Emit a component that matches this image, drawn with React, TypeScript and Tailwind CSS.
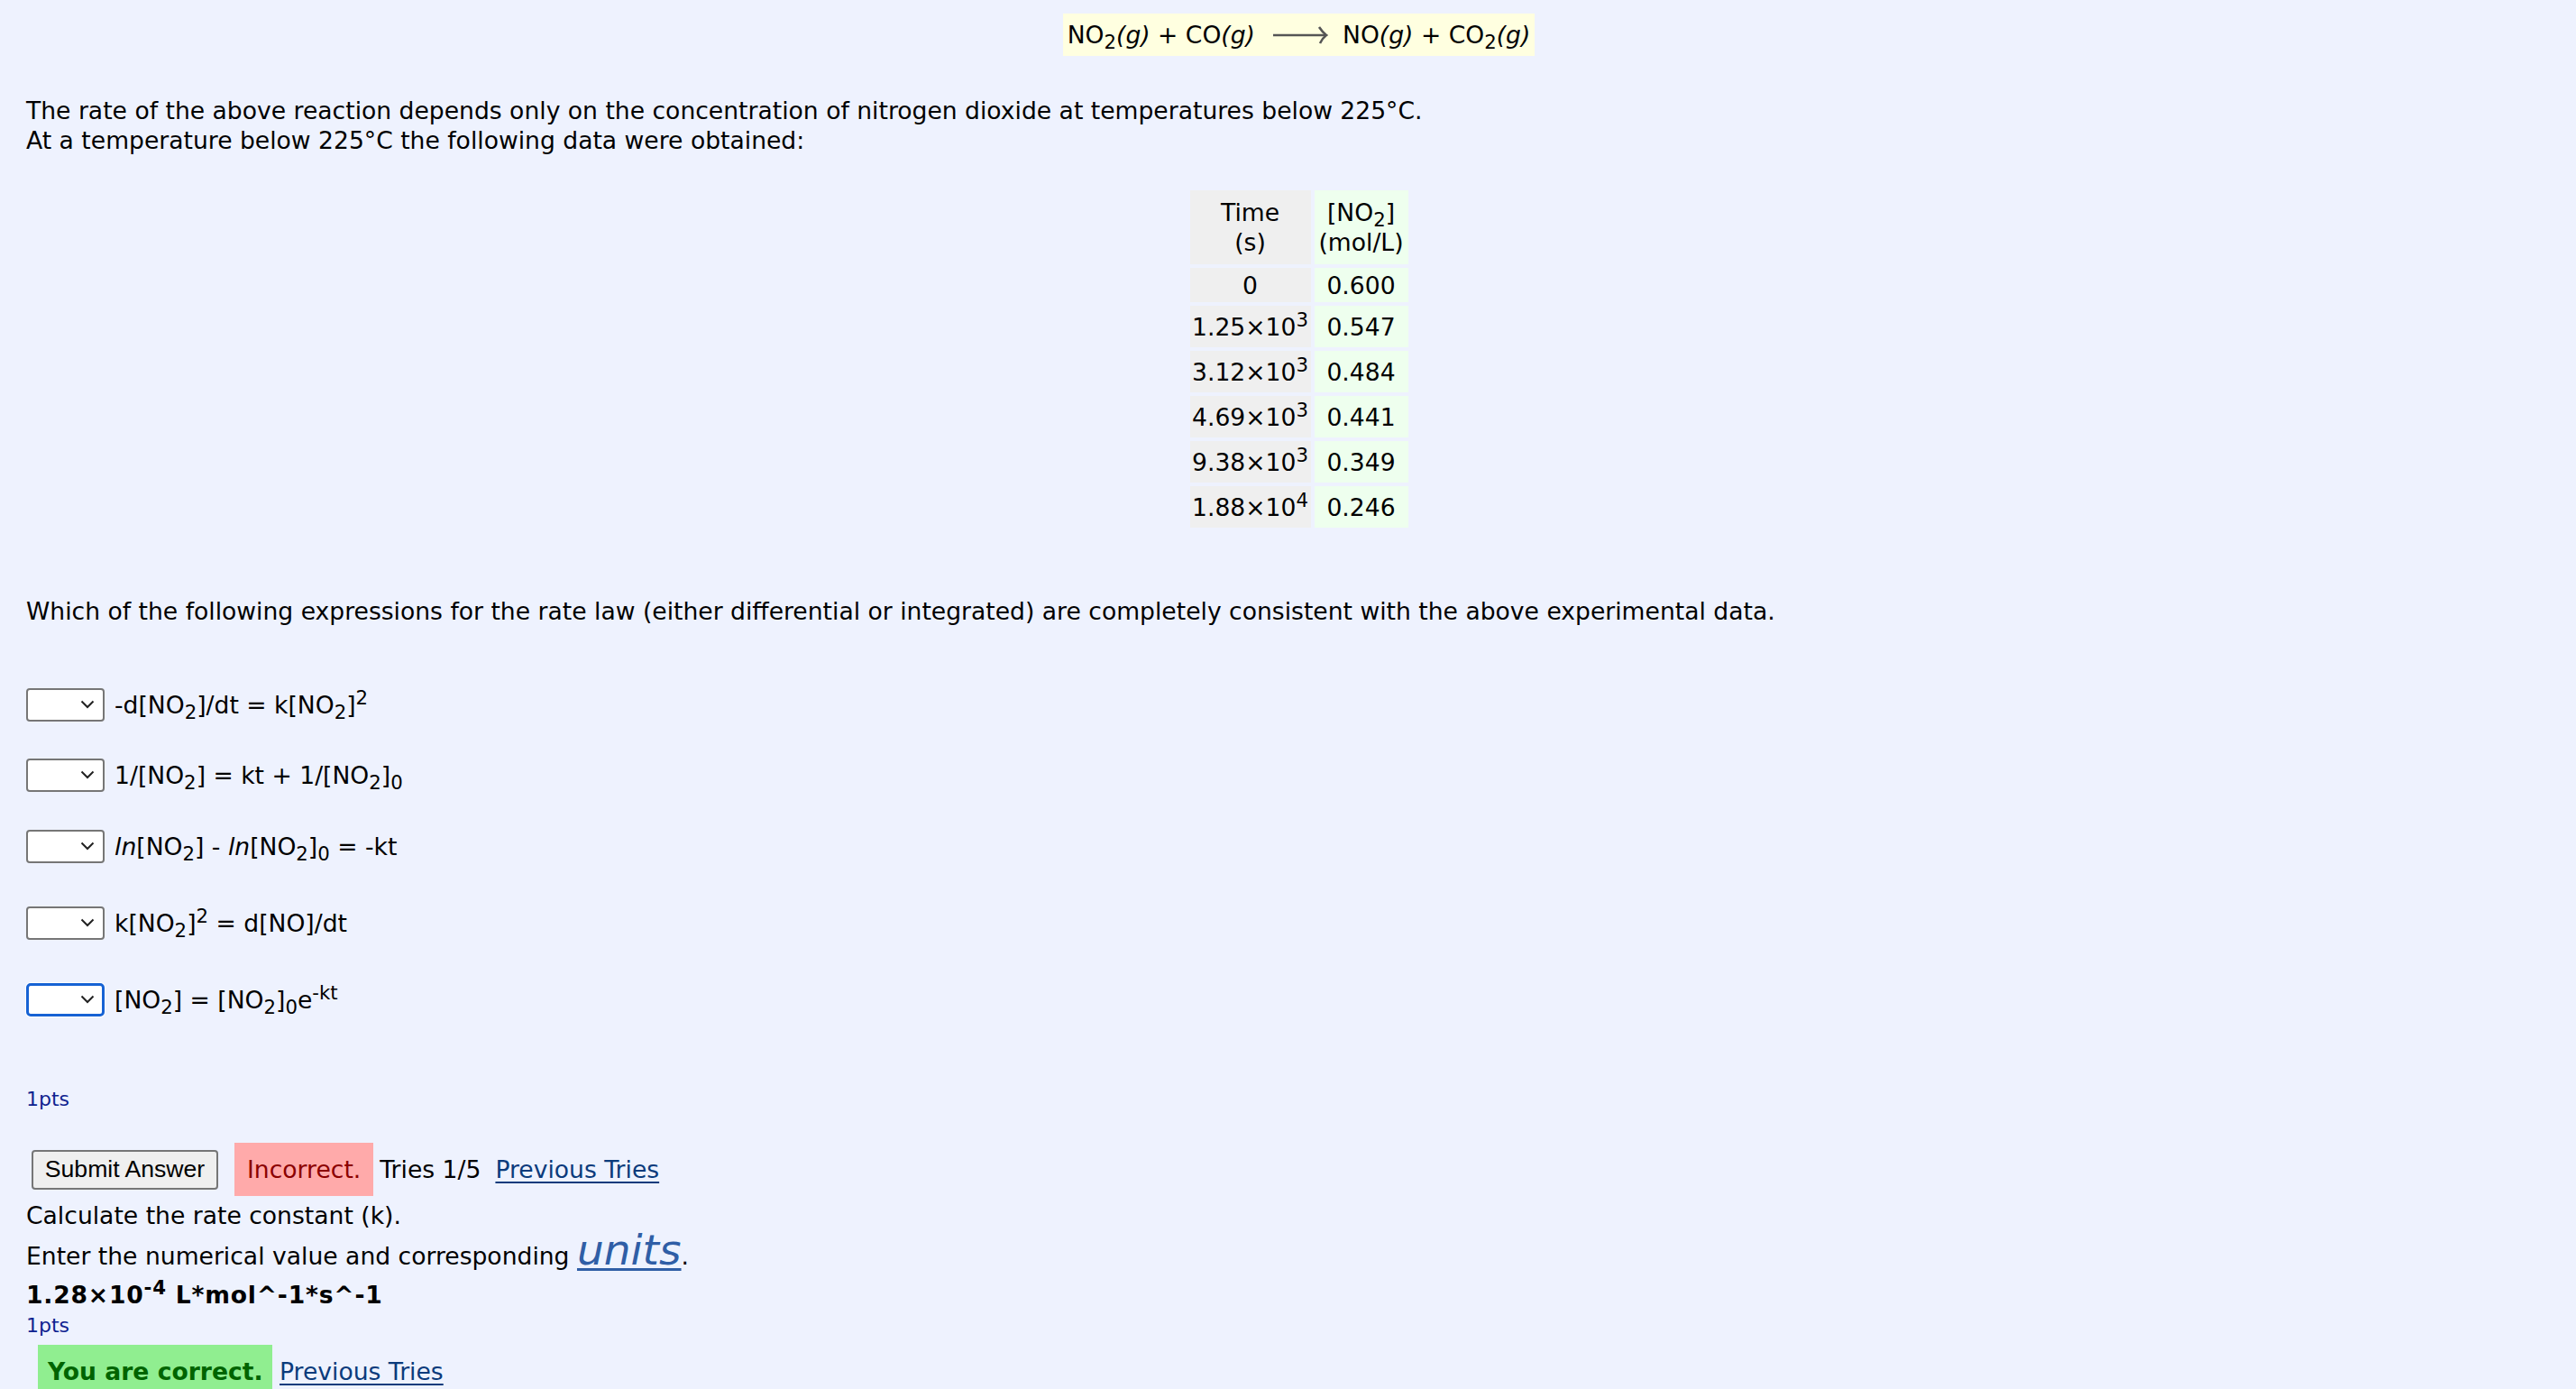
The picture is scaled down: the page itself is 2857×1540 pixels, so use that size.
import React from "react";

function Sub({ children }: { children: React.ReactNode }) {
  return <sub className="text-[0.8em] bottom-[-0.3em]">{children}</sub>;
}
function Sup({ children }: { children: React.ReactNode }) {
  return <sup className="text-[0.8em] top-[-0.45em]">{children}</sup>;
}

function Sel({ focused }: { focused?: boolean }) {
  return (
    <div
      className={
        focused
          ? "w-[87px] h-[37px] shrink-0 rounded-[5px] border-[3px] border-[#1662d4] bg-white flex items-center justify-end pr-[8px] shadow-[0_0_0_1px_#ffffff]"
          : "w-[87px] h-[37px] shrink-0 rounded-[4px] border-2 border-[#767676] bg-white flex items-center justify-end pr-[9px]"
      }
    >
      <svg width="16" height="10" viewBox="0 0 16 10">
        <path d="M1.5 1.5 L8 8 L14.5 1.5" fill="none" stroke="#222" strokeWidth="2" />
      </svg>
    </div>
  );
}

function Arrow() {
  return (
    <svg width="62" height="24" viewBox="0 0 62 24" className="inline-block ml-[19px] mr-[16px] align-[4px]">
      <path d="M1 12 L59 12" stroke="#555" strokeWidth="2.6" fill="none" />
      <path d="M52 3 Q56 9 60 12 Q56 15 53 21" stroke="#555" strokeWidth="2.6" fill="none" />
    </svg>
  );
}

const cellGray = "bg-[#efefef] w-[134px] p-0 text-center align-middle";
const cellGreen = "bg-[#eeffee] w-[104px] p-0 text-center align-middle";

const rows: [string, string | null, string][] = [
  ["1.25×10", "3", "0.547"],
  ["3.12×10", "3", "0.484"],
  ["4.69×10", "3", "0.441"],
  ["9.38×10", "3", "0.349"],
  ["1.88×10", "4", "0.246"],
];

export default function App() {
  return (
    <div className="min-h-[1540px] bg-[#eef2fe] pl-[29px] pr-[5px] font-['DejaVu_Sans',sans-serif] text-[26.6px] leading-[33px] text-black overflow-hidden">
      {/* Equation */}
      <div className="flex justify-center pt-[15px]">
        <div className="h-[47px] bg-[#ffffe0] px-[5px] flex items-center whitespace-nowrap">
          <span>
            NO<Sub>2</Sub>
            <i>(g)</i> + CO<i>(g)</i>
          </span>
          <Arrow />
          <span>
            NO<i>(g)</i> + CO<Sub>2</Sub>
            <i>(g)</i>
          </span>
        </div>
      </div>

      {/* Paragraph */}
      <p className="mt-[44px]">
        The rate of the above reaction depends only on the concentration of nitrogen dioxide at temperatures below 225°C.
        <br />
        At a temperature below 225°C the following data were obtained:
      </p>

      {/* Table */}
      <table className="mx-auto mt-[35px] border-separate border-spacing-[4px]">
        <tbody>
          <tr className="h-[82px]">
            <td className={cellGray}>
              Time
              <br />
              (s)
            </td>
            <td className={cellGreen}>
              [NO<Sub>2</Sub>]
              <br />
              (mol/L)
            </td>
          </tr>
          <tr className="h-[38px]">
            <td className={cellGray}>0</td>
            <td className={cellGreen}>0.600</td>
          </tr>
          {rows.map((r, i) => (
            <tr key={i} className="h-[46px]">
              <td className={cellGray + " whitespace-nowrap"}>
                {r[0]}
                <Sup>{r[1]}</Sup>
              </td>
              <td className={cellGreen}>{r[2]}</td>
            </tr>
          ))}
        </tbody>
      </table>

      <p className="mt-[72px]">
        Which of the following expressions for the rate law (either differential or integrated) are completely consistent with the above experimental data.
      </p>

      {/* Options */}
      <div className="flex flex-col">
        <div className="mt-[65px] h-[44px] flex items-center gap-[11px]">
          <Sel />
          <span>
            -d[NO<Sub>2</Sub>]/dt = k[NO<Sub>2</Sub>]<Sup>2</Sup>
          </span>
        </div>
        <div className="mt-[34px] h-[44px] flex items-center gap-[11px]">
          <Sel />
          <span>
            1/[NO<Sub>2</Sub>] = kt + 1/[NO<Sub>2</Sub>]<Sub>0</Sub>
          </span>
        </div>
        <div className="mt-[35px] h-[44px] flex items-center gap-[11px]">
          <Sel />
          <span>
            <i>ln</i>[NO<Sub>2</Sub>] - <i>ln</i>[NO<Sub>2</Sub>]<Sub>0</Sub> = -kt
          </span>
        </div>
        <div className="mt-[41px] h-[44px] flex items-center gap-[11px]">
          <Sel />
          <span>
            k[NO<Sub>2</Sub>]<Sup>2</Sup> = d[NO]/dt
          </span>
        </div>
        <div className="mt-[41px] h-[44px] flex items-center gap-[11px]">
          <Sel focused />
          <span>
            [NO<Sub>2</Sub>] = [NO<Sub>2</Sub>]<Sub>0</Sub>e<Sup>-kt</Sup>
          </span>
        </div>
      </div>

      <div className="mt-[75px] text-[22px] leading-[27px] text-[#0f2390]">1pts</div>

      {/* Submit row */}
      <div className="mt-[35px] h-[59px] flex items-center whitespace-nowrap">
        <div className="ml-[6px] w-[207px] h-[44px] bg-[#efefef] border-2 border-[#767676] rounded-[4px] flex items-center justify-center font-['Liberation_Sans',Arial,sans-serif] text-[26.6px] leading-none">
          Submit Answer
        </div>
        <div className="ml-[18px] h-[59px] bg-[#ffaaaa] px-[14px] flex items-center text-[#8b0000]">Incorrect.</div>
        <span className="ml-[7px]">Tries 1/5</span>
        <span className="ml-[16px] text-[#0b3b7c] underline underline-offset-[4px]">Previous Tries</span>
      </div>

      <div className="mt-[5px]">Calculate the rate constant (k).</div>
      <div className="mt-[12px] whitespace-nowrap">
        Enter the numerical value and corresponding{" "}
        <span className="text-[47px] leading-[0] italic text-[#2f5ea6] underline decoration-[3px] underline-offset-[4px]">units</span>.
      </div>
      <div className="mt-[10px] font-bold tracking-[0.8px]">
        1.28×10<Sup>-4</Sup> L*mol^-1*s^-1
      </div>
      <div className="mt-[4px] text-[22px] leading-[27px] text-[#0f2390]">1pts</div>

      <div className="mt-[8px] flex items-start whitespace-nowrap">
        <div className="ml-[13px] w-[260px] h-[62px] bg-[#90ee90] pt-[13px] pl-[11px] font-bold text-[#006400]">You are correct.</div>
        <span className="ml-[8px] pt-[13px] text-[#0b3b7c] underline underline-offset-[4px]">Previous Tries</span>
      </div>
    </div>
  );
}
